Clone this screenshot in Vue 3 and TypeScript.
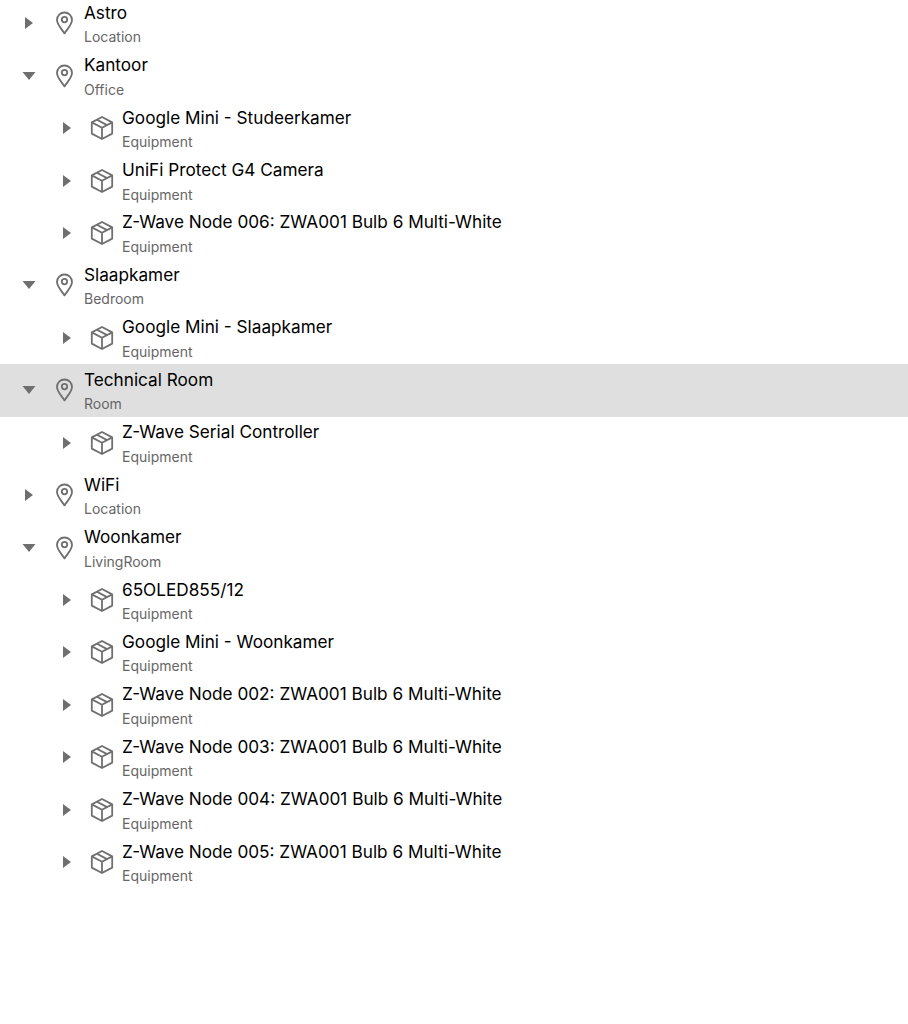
<script setup lang="ts">
interface Row { title: string; sub: string; level: number; open: boolean; selected?: boolean }
const eq = (title: string): Row => ({ title, sub: 'Equipment', level: 1, open: false })
const loc = (title: string, sub: string, open: boolean, selected = false): Row => ({ title, sub, level: 0, open, selected })
const rows: Row[] = [
  loc('Astro', 'Location', false),
  loc('Kantoor', 'Office', true),
  eq('Google Mini - Studeerkamer'),
  eq('UniFi Protect G4 Camera'),
  eq('Z-Wave Node 006: ZWA001 Bulb 6 Multi-White'),
  loc('Slaapkamer', 'Bedroom', true),
  eq('Google Mini - Slaapkamer'),
  loc('Technical Room', 'Room', true, true),
  eq('Z-Wave Serial Controller'),
  loc('WiFi', 'Location', false),
  loc('Woonkamer', 'LivingRoom', true),
  eq('65OLED855/12'),
  eq('Google Mini - Woonkamer'),
  eq('Z-Wave Node 002: ZWA001 Bulb 6 Multi-White'),
  eq('Z-Wave Node 003: ZWA001 Bulb 6 Multi-White'),
  eq('Z-Wave Node 004: ZWA001 Bulb 6 Multi-White'),
  eq('Z-Wave Node 005: ZWA001 Bulb 6 Multi-White'),
]
</script>

<template>
  <div class="tree">
    <div v-for="r in rows" :key="r.title" class="row" :class="{ selected: r.selected, child: r.level === 1 }">
      <svg class="caret" viewBox="0 0 14 14" width="14" height="14">
        <path v-if="r.open" d="M0.5 3H13.5L7 11Z" fill="#6f6f6f" />
        <path v-else d="M3 1L11 7L3 13Z" fill="#6f6f6f" />
      </svg>
      <svg v-if="r.level === 0" class="icon" viewBox="0 0 24 24" width="24" height="24" fill="none" stroke="#6f6f6f" stroke-width="1.8" stroke-linejoin="round">
        <path d="M12.5 22.4C10 18.4 5 13.6 5 9A7.5 7.5 0 0 1 20 9C20 13.6 15 18.4 12.5 22.4Z" />
        <circle cx="12.5" cy="8.6" r="2.7" />
      </svg>
      <svg v-else class="icon" viewBox="0 0 24 24" width="24" height="24" fill="none" stroke="#6f6f6f" stroke-width="1.8" stroke-linejoin="round">
        <path d="M12 1L22.2 6.4V17.6L12 23L1.8 17.6V6.4Z" />
        <path d="M1.8 6.4L12 11.8L22.2 6.4M12 11.8V23M6.9 3.7L17.1 9.1" />
      </svg>
      <div class="text">
        <div class="title">{{ r.title }}</div>
        <div class="sub">{{ r.sub }}</div>
      </div>
    </div>
  </div>
</template>

<style>
body { background: #fff; }
</style>

<style scoped>
.tree {
  display: flex;
  flex-direction: column;
  font-family: Inter, "Liberation Sans", sans-serif;
  margin-top: -3px;
}
.row {
  display: flex;
  align-items: center;
  height: 52.44px;
  padding-left: 22px;
}
.row.child { padding-left: 60px; }
.row.selected { background: #dfdfdf; }
.caret { flex: none; }
.icon { flex: none; margin-left: 16px; }
.text { margin-left: 8px; padding-top: 1.5px; }
.title { font-size: 17.2px; line-height: 25px; color: #000; }
.sub { font-size: 14px; line-height: 23px; margin-top: 0.5px; color: #666; }
</style>
